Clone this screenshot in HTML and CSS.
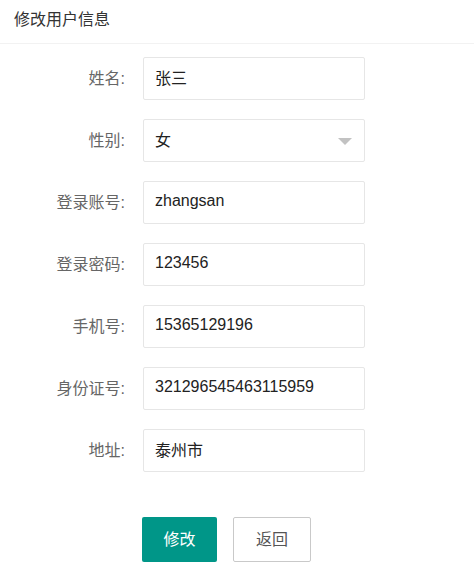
FILE: index.html
```html
<!DOCTYPE html>
<html lang="zh-CN">
<head>
<meta charset="utf-8">
<title>修改用户信息</title>
<link rel="stylesheet" href="styles.css">
</head>
<body>
<div class="card">
  <div class="card-header">修改用户信息</div>
  <form class="form">
    <div class="row">
      <label class="label">姓名:</label>
      <div class="field"><input class="input" type="text" value="张三"></div>
    </div>
    <div class="row">
      <label class="label">性别:</label>
      <div class="field select"><span class="select-value">女</span><i class="caret"></i></div>
    </div>
    <div class="row">
      <label class="label">登录账号:</label>
      <div class="field"><input class="input" type="text" value="zhangsan"></div>
    </div>
    <div class="row">
      <label class="label">登录密码:</label>
      <div class="field"><input class="input" type="text" value="123456"></div>
    </div>
    <div class="row">
      <label class="label">手机号:</label>
      <div class="field"><input class="input" type="text" value="15365129196"></div>
    </div>
    <div class="row">
      <label class="label">身份证号:</label>
      <div class="field"><input class="input" type="text" value="321296545463115959"></div>
    </div>
    <div class="row">
      <label class="label">地址:</label>
      <div class="field"><input class="input" type="text" value="泰州市"></div>
    </div>
    <div class="actions">
      <button type="button" class="btn btn-primary">修改</button>
      <button type="button" class="btn btn-default">返回</button>
    </div>
  </form>
</div>
</body>
</html>
```
FILE: styles.css
```css
* { box-sizing: border-box; }
html, body {
  margin: 0;
  padding: 0;
  background: #fff;
}
body {
  font-family: "Liberation Sans", Arial, "Noto Sans CJK SC", sans-serif;
  font-size: 16px;
  color: #333;
}
.card-header {
  height: 44px;
  line-height: 40px;
  padding-left: 14px;
  font-size: 16px;
  color: #333;
  border-bottom: 1px solid #f2f2f2;
}
.form {
  padding-top: 13px;
  margin: 0;
}
.row {
  display: flex;
  align-items: center;
  height: 43px;
  margin-bottom: 19px;
}
.label {
  width: 125px;
  text-align: right;
  color: #666;
  font-size: 16px;
  padding-right: 0;
  margin-top: -4px;
}
.field {
  margin-left: 18px;
  width: 222px;
  height: 43px;
  border: 1px solid #e6e6e6;
  border-radius: 2px;
  background: #fff;
  position: relative;
}
.input {
  display: block;
  width: 100%;
  height: 100%;
  border: 0;
  outline: none;
  padding: 0 0 3px 11px;
  font-family: "Liberation Sans", Arial, "Noto Sans CJK SC", sans-serif;
  font-size: 16px;
  color: #222;
  background: transparent;
}
.select {
  display: flex;
  align-items: center;
  padding-left: 11px;
}
.select-value {
  color: #222;
  margin-top: -3px;
}
.caret {
  position: absolute;
  right: 12px;
  top: 18px;
  width: 0;
  height: 0;
  border-left: 7px solid transparent;
  border-right: 7px solid transparent;
  border-top: 7px solid #c2c2c2;
}
.actions {
  display: flex;
  gap: 16px;
  padding-left: 142px;
  margin-top: 45px;
}
.btn {
  height: 45px;
  border-radius: 2px;
  font-family: "Liberation Sans", Arial, "Noto Sans CJK SC", sans-serif;
  font-size: 16px;
  cursor: pointer;
  padding: 0 0 3px;
}
.btn-primary {
  width: 75px;
  background: #009688;
  border: 0;
  color: #fff;
}
.btn-default {
  width: 78px;
  background: #fff;
  border: 1px solid #c9c9c9;
  color: #555;
}
```
